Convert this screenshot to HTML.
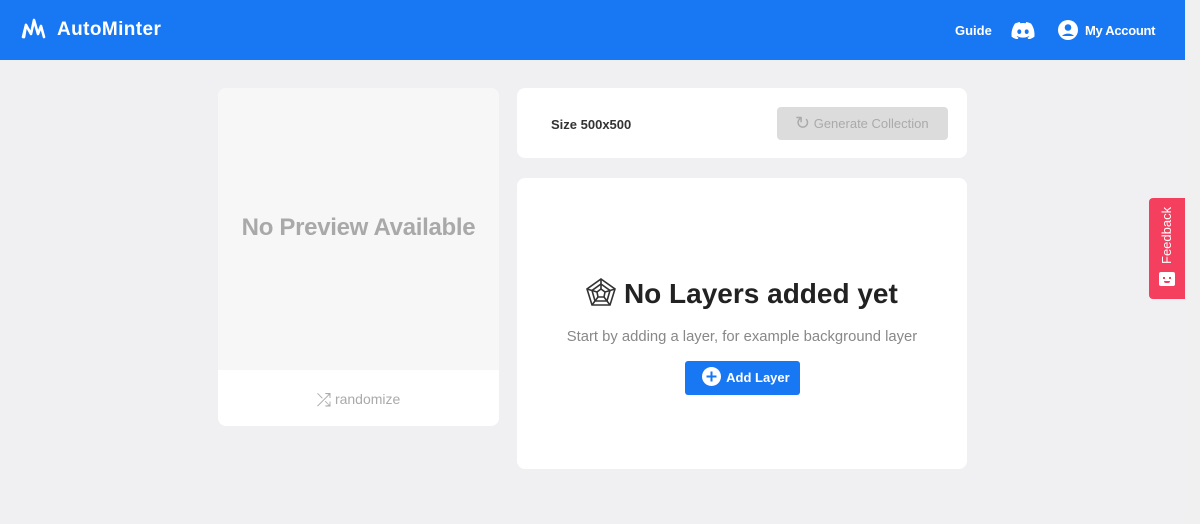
<!DOCTYPE html>
<html><head><style>
*{margin:0;padding:0;box-sizing:border-box}
body{width:1200px;height:524px;background:#f0f0f3;font-family:"Liberation Sans",sans-serif;position:relative;overflow:hidden}
.nav{position:absolute;left:0;top:0;width:1185px;height:60px;background:#1877f2;color:#fff}
.sb{position:absolute;left:1185px;top:0;width:15px;height:524px;background:#f0f0f0}
.card{position:absolute;background:#fff;border-radius:8px;overflow:hidden}
</style></head><body>
<div class="nav">
<svg style="position:absolute;left:21px;top:17px" width="26" height="24" viewBox="0 0 26 24" fill="none" stroke="#fff" stroke-width="2.6" stroke-linejoin="round" stroke-linecap="round"><path d="M2 20 L5 8 L10 17 L13 3 L17 17 L20 9 L23 20"/><path d="M5 8 L3 20"/></svg>
<div style="position:absolute;left:57px;top:19px;font-size:19px;font-weight:bold;letter-spacing:0.4px">AutoMinter</div>
<div style="position:absolute;left:955px;top:23px;font-size:13px;font-weight:bold">Guide</div>
<svg style="position:absolute;left:1011px;top:22px" width="24" height="17" viewBox="0 0 24 17"><path fill="#fff" d="M20 1.5A19 19 0 0 0 15.3 0l-.6 1.2a17 17 0 0 0-5.4 0L8.7 0A19 19 0 0 0 4 1.5C1 6 .2 10.4.6 14.7A19 19 0 0 0 6.4 17.5l1.2-1.9a12 12 0 0 1-1.9-.9l.5-.4a13.6 13.6 0 0 0 11.6 0l.5.4c-.6.4-1.2.7-1.9.9l1.2 1.9a19 19 0 0 0 5.8-2.8C23.9 9.7 22.7 5.3 20 1.5zM8.3 12c-1.1 0-2-1-2-2.3s.9-2.3 2-2.3 2 1 2 2.3-.9 2.3-2 2.3zm7.4 0c-1.1 0-2-1-2-2.3s.9-2.3 2-2.3 2 1 2 2.3-.9 2.3-2 2.3z"/></svg>
<svg style="position:absolute;left:1058px;top:20px" width="20" height="20" viewBox="0 0 20 20"><circle cx="10" cy="10" r="10" fill="#fff"/><circle cx="10" cy="7.5" r="3.3" fill="#1877f2"/><path d="M4 16a7 5 0 0 1 12 0" fill="#1877f2"/></svg>
<div style="position:absolute;left:1085px;top:23px;font-size:13px;font-weight:bold;letter-spacing:-0.3px">My Account</div>
</div>
<div class="sb"></div>
<div class="card" style="left:218px;top:88px;width:281px;height:338px">
<div style="height:282px;background:#f7f7f7;color:#a9a9a9;font-size:24px;font-weight:bold;text-align:center;padding-top:126px;letter-spacing:-0.3px">No Preview Available</div>
<div style="position:absolute;left:0;right:0;top:302px;text-align:center;color:#aaa;font-size:14px">
<span style="font-size:18px;vertical-align:-2px">⤮</span> randomize</div>
</div>
<div class="card" style="left:517px;top:88px;width:450px;height:70px">
<div style="position:absolute;left:34px;top:29px;font-size:13px;font-weight:bold;color:#333">Size 500x500</div>
<div style="position:absolute;left:260px;top:19px;width:171px;height:33px;background:#dcdcdc;border-radius:4px;color:#aaa;font-size:13px;line-height:33px;padding-left:18px"><span style="font-size:18px;vertical-align:-1px">↻</span> Generate Collection</div>
</div>
<div class="card" style="left:517px;top:178px;width:450px;height:291px">
<div style="position:absolute;left:0;right:0;top:100px;text-align:center;font-size:28px;font-weight:bold;color:#222">
<svg width="30" height="28" viewBox="0 0 30 28" style="vertical-align:-3px" fill="none" stroke="#333" stroke-width="1.6"><path d="M15 1L29 11L24 27H6L1 11Z"/><path d="M15 6L24 12.5L21 23H9L6 12.5Z"/><path d="M15 11L19 14L18 19H12L11 14Z"/><path d="M15 1V11M29 11L19 14M24 27L18 19M6 27L12 19M1 11L11 14"/></svg> No Layers added yet</div>
<div style="position:absolute;left:0;right:0;top:151px;text-align:center;font-size:14.8px;color:#888">Start by adding a layer, for example background layer</div>
<div style="position:absolute;left:168px;top:183px;width:115px;height:34px;background:#1877f2;border-radius:3px;color:#fff;font-size:13px;font-weight:bold;line-height:34px;padding-left:17px">
<svg width="19" height="19" viewBox="0 0 19 19" style="vertical-align:-4px;margin-right:2px"><circle cx="9.5" cy="9.5" r="9.5" fill="#fff"/><path d="M9.5 4.5v10M4.5 9.5h10" stroke="#1877f2" stroke-width="2"/></svg> Add Layer</div>
</div>
<div style="position:absolute;left:1149px;top:198px;width:36px;height:101px;background:#f43f5e;border-radius:4px 0 0 4px">
<div style="position:absolute;left:10px;top:66px;transform:rotate(-90deg);transform-origin:0 0;color:#fff;font-size:13px;white-space:nowrap">Feedback</div>
<div style="position:absolute;left:10px;top:74px;width:16px;height:14px;background:#fff;border-radius:2px"><div style="position:absolute;left:4px;top:5px;width:2px;height:2px;background:#f43f5e"></div><div style="position:absolute;left:10px;top:5px;width:2px;height:2px;background:#f43f5e"></div><div style="position:absolute;left:5px;top:9px;width:6px;height:2px;border-radius:0 0 3px 3px;background:#f43f5e"></div></div>
</div>
</body></html>
